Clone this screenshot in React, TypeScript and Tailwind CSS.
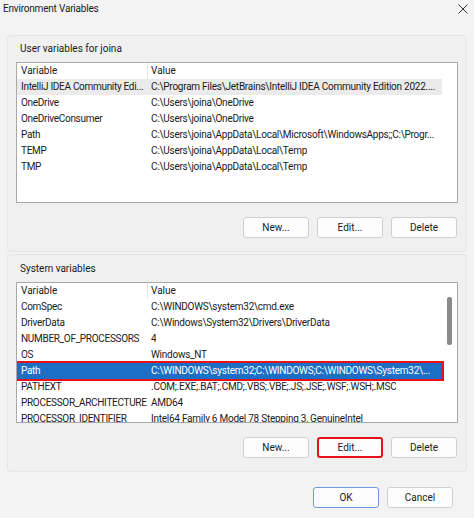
import React from 'react'

type Row = { name: string; value: string; hover?: boolean; selected?: boolean }

const userRows: Row[] = [
  { name: 'IntelliJ IDEA Community Edi...', value: 'C:\\Program Files\\JetBrains\\IntelliJ IDEA Community Edition 2022....', hover: true },
  { name: 'OneDrive', value: 'C:\\Users\\joina\\OneDrive' },
  { name: 'OneDriveConsumer', value: 'C:\\Users\\joina\\OneDrive' },
  { name: 'Path', value: 'C:\\Users\\joina\\AppData\\Local\\Microsoft\\WindowsApps;;C:\\Progr...' },
  { name: 'TEMP', value: 'C:\\Users\\joina\\AppData\\Local\\Temp' },
  { name: 'TMP', value: 'C:\\Users\\joina\\AppData\\Local\\Temp' },
]

const systemRows: Row[] = [
  { name: 'ComSpec', value: 'C:\\WINDOWS\\system32\\cmd.exe' },
  { name: 'DriverData', value: 'C:\\Windows\\System32\\Drivers\\DriverData' },
  { name: 'NUMBER_OF_PROCESSORS', value: '4' },
  { name: 'OS', value: 'Windows_NT' },
  { name: 'Path', value: 'C:\\WINDOWS\\system32;C:\\WINDOWS;C:\\WINDOWS\\System32\\...', selected: true },
  { name: 'PATHEXT', value: '.COM;.EXE;.BAT;.CMD;.VBS;.VBE;.JS;.JSE;.WSF;.WSH;.MSC' },
  { name: 'PROCESSOR_ARCHITECTURE', value: 'AMD64' },
  { name: 'PROCESSOR_IDENTIFIER', value: 'Intel64 Family 6 Model 78 Stepping 3, GenuineIntel' },
]

const Button = ({ label, variant }: { label: string; variant?: 'red' | 'default' }) => {
  let cls = 'border border-[#d0d0d0]'
  if (variant === 'red') cls = 'border-2 border-[#e3121b]'
  if (variant === 'default') cls = 'border border-[#6d9bd6]'
  return (
    <div className={`flex h-[21px] w-[66px] items-center justify-center rounded-[3px] bg-[#fdfdfd] text-[#1b1b1b] ${cls}`}>
      {label}
    </div>
  )
}

const VarList = ({ rows, scroll }: { rows: Row[]; scroll?: boolean }) => (
  <div className="flex h-[141px] overflow-hidden border border-[#a9a9a9] bg-white">
    <div className="flex w-[425px] shrink-0 flex-col">
      <div className="flex h-4 shrink-0 items-center">
        <div className="h-full w-[131px] shrink-0 border-r border-[#e5e5e5] pl-1 leading-4">Variable</div>
        <div className="pl-[3px] leading-4">Value</div>
      </div>
      {rows.map((r) => (
        <div
          key={r.name + r.value}
          className={`flex h-4 shrink-0 items-center whitespace-nowrap ${
            r.selected ? 'relative z-10 bg-[#1c6fc4] text-white ring-2 ring-[#e3121b]' : r.hover ? 'bg-[#ebebeb]' : ''
          }`}
        >
          <div className="w-[131px] shrink-0 overflow-hidden pl-1 leading-4 tracking-[-0.3px]">{r.name}</div>
          <div className="min-w-0 overflow-hidden pl-[3px] leading-4 tracking-[-0.25px]">{r.value}</div>
        </div>
      ))}
    </div>
    <div className="flex flex-1 justify-center">
      {scroll && <div className="mt-[14px] h-[48px] w-[5px] rounded-[2px] bg-[#8a8a8a]" />}
    </div>
  </div>
)

const Group = ({ title, rows, scroll, redEdit, top }: { title: string; rows: Row[]; scroll?: boolean; redEdit?: boolean; top: string }) => (
  <div className={`mx-[7px] rounded-[4px] border border-[#e6e6e6] bg-[#f0f0f0] px-[8px] ${top}`}>
    <div className="flex h-[26px] items-center pb-[2px] pl-[4px]">{title}</div>
    <VarList rows={rows} scroll={scroll} />
    <div className="mb-[13px] mt-[14px] flex justify-end gap-2 pr-[1px]">
      <Button label="New..." />
      <Button label="Edit..." variant={redEdit ? 'red' : undefined} />
      <Button label="Delete" />
    </div>
  </div>
)

export default function App() {
  return (
    <div
      className="flex h-[518px] w-[474px] flex-col overflow-hidden bg-[#f3f3f3] text-[10px] text-[#1a1a1a]"
      style={{ fontFamily: 'Roboto, "Liberation Sans", sans-serif' }}
    >
      <div className="flex h-[17px] shrink-0 items-center justify-between pl-[3px] pr-[6px]">
        <span className="tracking-[-0.2px]">Environment Variables</span>
        <svg width="10" height="10" viewBox="0 0 10 10" className="text-[#333]">
          <path d="M0.5 0.5 L9.5 9.5 M9.5 0.5 L0.5 9.5" stroke="currentColor" strokeWidth="1" />
        </svg>
      </div>
      <Group title="User variables for joina" rows={userRows} top="mt-[18px]" />
      <Group title="System variables" rows={systemRows} scroll redEdit top="mt-[2px] pt-[1px]" />
      <div className="mt-[15px] flex justify-end gap-2 pr-[21px]">
        <Button label="OK" variant="default" />
        <Button label="Cancel" />
      </div>
    </div>
  )
}
